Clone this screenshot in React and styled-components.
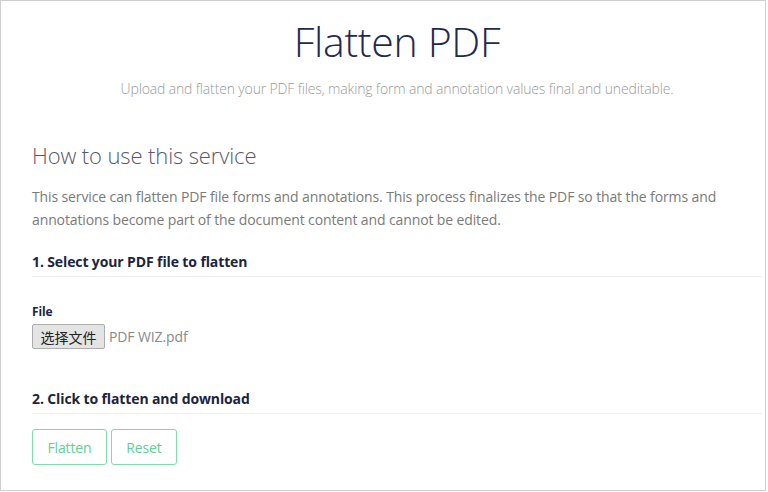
import React from "react";
import styled, { createGlobalStyle } from "styled-components";

const Global = createGlobalStyle`
  html, body { margin: 0; padding: 0; background: #fff; }
  body { font-family: "Open Sans", "Noto Sans", sans-serif; letter-spacing: -0.12px; }
  * { box-sizing: border-box; }
`;

const Frame = styled.div`
  width: 766px;
  height: 491px;
  border: 1px solid #cfcfcf;
  padding: 0 3px 0 31px;
  overflow: hidden;
`;

const Hero = styled.header`
  display: flex;
  flex-direction: column;
  align-items: center;
  padding-top: 12px;
`;

const Title = styled.h1`
  margin: 0;
  font-size: 41px;
  font-weight: 300;
  line-height: 56px;
  letter-spacing: -0.3px;
  color: #1f2b4d;
`;

const Subtitle = styled.p`
  margin: 10px 0 0;
  font-size: 14px;
  font-weight: 300;
  line-height: 20px;
  letter-spacing: -0.15px;
  color: #9a9a9a;
`;

const SectionTitle = styled.h2`
  margin: 41px 0 0;
  font-size: 22px;
  font-weight: 300;
  line-height: 30px;
  color: #5a5768;
`;

const Text = styled.p`
  margin: 15px 0 0;
  font-size: 14px;
  line-height: 23px;
  color: #7a7a7a;
`;

const StepTitle = styled.h4`
  margin: ${(p) => p.$top}px 0 0;
  padding-bottom: 4px;
  border-bottom: 1px solid #eeeeee;
  font-size: 14px;
  font-weight: 700;
  line-height: 20px;
  color: #1b2440;
`;

const Field = styled.div`
  display: flex;
  flex-direction: column;
  align-items: flex-start;
  margin-top: 26px;
`;

const Label = styled.label`
  font-size: 12px;
  font-weight: 700;
  line-height: 18px;
  color: #1b2440;
`;

const FileRow = styled.div`
  display: flex;
  align-items: center;
  gap: 4px;
  margin-top: 3px;
`;

const FileButton = styled.button`
  height: 25px;
  width: 73px;
  padding: 0;
  border: 1px solid #adadad;
  border-radius: 2px;
  background: #e4e4e4;
  font-family: "Noto Sans CJK SC", "Noto Sans", sans-serif;
  font-size: 14px;
  letter-spacing: 0;
  color: #222;
`;

const FileName = styled.span`
  font-size: 14px;
  color: #8a8a8a;
`;

const Actions = styled.div`
  display: flex;
  gap: 4px;
  margin-top: 15px;
`;

const OutlineButton = styled.button`
  height: 36px;
  width: ${(p) => p.$w}px;
  padding: 0;
  border: 1px solid #7fdcab;
  border-radius: 3px;
  background: #fff;
  font-family: "Open Sans", "Noto Sans", sans-serif;
  font-size: 14px;
  letter-spacing: -0.12px;
  color: #5fd096;
`;

export default function App() {
  return (
    <>
      <Global />
      <Frame>
        <Hero>
          <Title>Flatten PDF</Title>
          <Subtitle>
            Upload and flatten your PDF files, making form and annotation values final and uneditable.
          </Subtitle>
        </Hero>
        <SectionTitle>How to use this service</SectionTitle>
        <Text>
          This service can flatten PDF file forms and annotations. This process finalizes the PDF so that the forms and
          annotations become part of the document content and cannot be edited.
        </Text>
        <StepTitle $top={21}>1. Select your PDF file to flatten</StepTitle>
        <Field>
          <Label>File</Label>
          <FileRow>
            <FileButton type="button">选择文件</FileButton>
            <FileName>PDF WIZ.pdf</FileName>
          </FileRow>
        </Field>
        <StepTitle $top={40}>2. Click to flatten and download</StepTitle>
        <Actions>
          <OutlineButton type="button" $w={75}>Flatten</OutlineButton>
          <OutlineButton type="button" $w={66}>Reset</OutlineButton>
        </Actions>
      </Frame>
    </>
  );
}
